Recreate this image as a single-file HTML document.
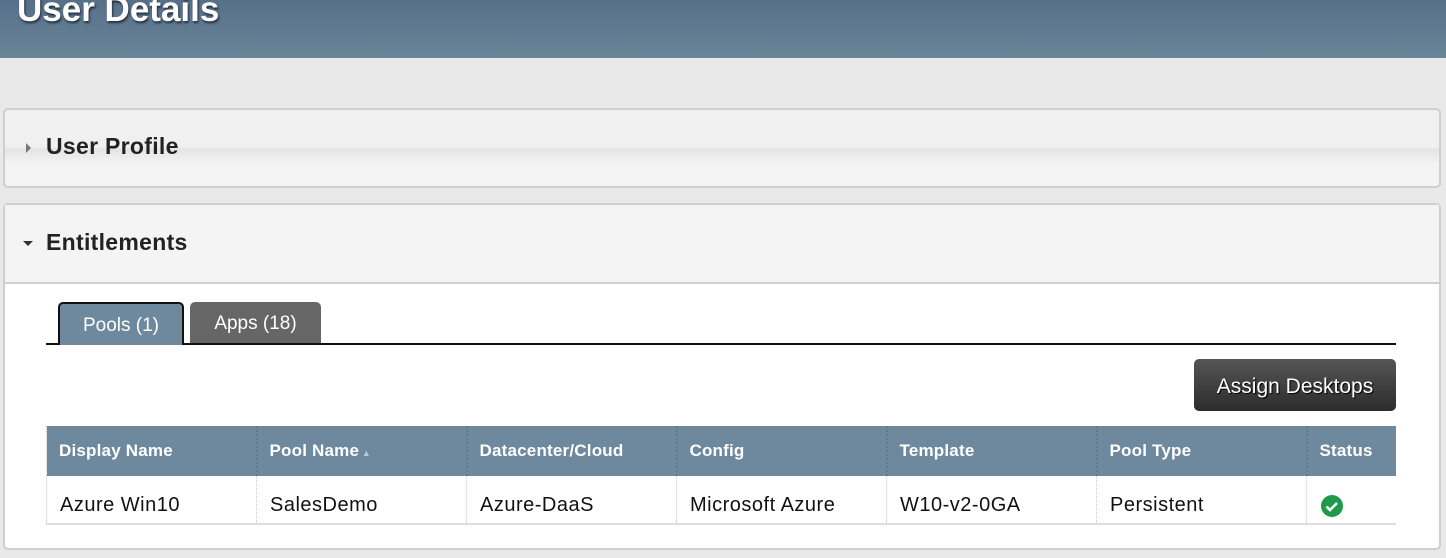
<!DOCTYPE html>
<html><head><style>
*{box-sizing:border-box;margin:0;padding:0}
body{width:1446px;height:558px;background:#e9e9e9;font-family:"Liberation Sans",sans-serif;position:relative;overflow:hidden}
.hdr{position:absolute;left:0;top:0;width:1446px;height:58px;background:linear-gradient(#56708a,#6a8498)}
.hdr h1{position:absolute;left:17px;top:-10px;font-size:35px;color:#fff;font-weight:bold;text-shadow:1px 2px 2px rgba(0,0,0,.6)}
.panel{position:absolute;left:3px;width:1438px;border:2px solid #cfcfcf;border-radius:5px;background:#f3f3f3}
.ph{font-size:23px;font-weight:bold;color:#222;position:absolute;left:41px;letter-spacing:0.3px}
.tri{position:absolute;width:0;height:0}
.tab{position:absolute;top:302px;height:43px;border-radius:5px 5px 0 0;color:#fff;font-size:19px;text-align:center;line-height:44px}
table{position:absolute;left:46px;top:426px;width:1350px;border-collapse:collapse}
th{background:#6e899d;color:#fff;font-size:17px;text-align:left;padding-left:12px;height:50px;border-left:2px dotted #5f7a8e;letter-spacing:0.2px}
td{background:#fff;font-size:20px;color:#111;padding-left:13px;padding-top:12px;height:48px;border-left:1px dotted #ccc;border-bottom:2px solid #ddd;letter-spacing:0.5px}
th:first-child,td:first-child{border-left:1px dotted #ccc}
</style></head><body>
<div class="hdr"><h1>User Details</h1></div>
<div class="panel" style="top:108px;height:80px;background:linear-gradient(#f0f0f0 0,#f0f0f0 48%,#e4e4e4 52%,#f3f3f3 70%)">
<div class="tri" style="left:21px;top:33px;border-left:5px solid #777;border-top:5px solid transparent;border-bottom:5px solid transparent"></div>
<div class="ph" style="top:23px">User Profile</div></div>
<div class="panel" style="top:203px;height:347px;background:#fff">
<div style="height:79px;background:#f4f4f4;border-bottom:2px solid #cfcfcf"></div>
<div class="tri" style="left:18px;top:36px;border-top:5px solid #333;border-left:5px solid transparent;border-right:5px solid transparent"></div>
<div class="ph" style="top:24px">Entitlements</div></div>
<div class="tab" style="left:58px;width:126px;background:#6e899d;border:2px solid #111;border-bottom:none">Pools (1)</div>
<div class="tab" style="left:190px;width:131px;background:#666">Apps (18)</div>
<div style="position:absolute;left:46px;top:343px;width:1350px;height:2px;background:#111"></div>
<div style="position:absolute;left:58px;top:343px;width:126px;height:2px;background:#6e899d;border-left:2px solid #111;border-right:2px solid #111"></div>
<div style="position:absolute;left:1194px;top:359px;width:202px;height:52px;border-radius:5px;background:linear-gradient(#555,#2c2c2c);color:#fff;font-size:21px;text-align:center;line-height:55px;text-shadow:1px 1px 1px #000">Assign Desktops</div>
<table><tr>
<th style="width:210px">Display Name</th><th style="width:210px">Pool Name<span style="font-size:9px;color:#b8c8d4"> ▲</span></th><th style="width:210px">Datacenter/Cloud</th><th style="width:210px">Config</th><th style="width:210px">Template</th><th style="width:210px">Pool Type</th><th>Status</th></tr>
<tr><td>Azure Win10</td><td>SalesDemo</td><td>Azure-DaaS</td><td>Microsoft Azure</td><td>W10-v2-0GA</td><td>Persistent</td><td><svg width="24" height="24" viewBox="0 0 24 24" style="vertical-align:middle"><circle cx="12" cy="12" r="11" fill="#1e9a4a"/><path d="M6.5 12.5l3.5 3.5 7-7" stroke="#fff" stroke-width="2.6" fill="none"/></svg></td></tr>
</table>
</body></html>
